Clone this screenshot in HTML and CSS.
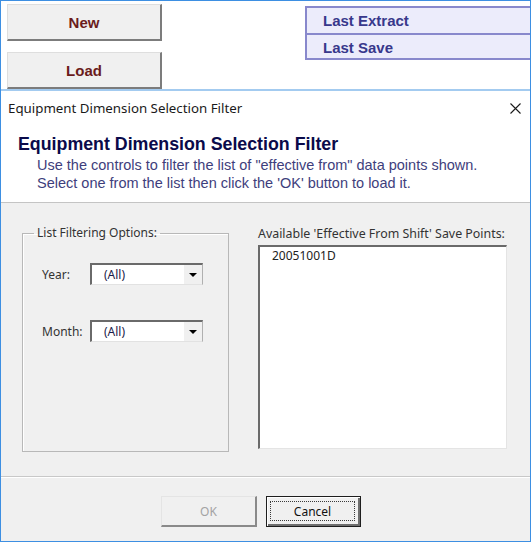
FILE: index.html
```html
<!DOCTYPE html>
<html>
<head>
<meta charset="utf-8">
<link rel="stylesheet" href="styles.css">
</head>
<body>
<div class="frame">
  <div class="top">
    <div class="top-buttons">
      <button class="big-btn">New</button>
      <button class="big-btn">Load</button>
    </div>
    <div class="status">
      <div class="status-row">Last Extract</div>
      <div class="status-row">Last Save</div>
    </div>
  </div>
  <div class="accent-line"></div>
  <div class="dialog">
    <div class="titlebar">
      <span class="title-text">Equipment Dimension Selection Filter</span>
      <svg class="close" width="11" height="11" viewBox="0 0 11 11"><path d="M0.5 0.5 L10.5 10.5 M10.5 0.5 L0.5 10.5" stroke="#1a1a1a" stroke-width="1.1" fill="none"/></svg>
    </div>
    <div class="header">
      <div class="heading">Equipment Dimension Selection Filter</div>
      <div class="desc">Use the controls to filter the list of "effective from" data points shown.<br>Select one from the list then click the 'OK' button to load it.</div>
    </div>
    <div class="body">
      <fieldset class="group">
        <legend class="legend">List Filtering Options:</legend>
        <div class="field-row first">
          <span class="field-label">Year:</span>
          <div class="combo"><span class="combo-text">(All)</span><span class="combo-btn"><span class="tri"></span></span></div>
        </div>
        <div class="field-row">
          <span class="field-label">Month:</span>
          <div class="combo"><span class="combo-text">(All)</span><span class="combo-btn"><span class="tri"></span></span></div>
        </div>
      </fieldset>
      <div class="list-col">
        <div class="list-label">Available 'Effective From Shift' Save Points:</div>
        <div class="listbox">
          <div class="list-item">20051001D</div>
        </div>
      </div>
    </div>
    <div class="footer">
      <button class="dlg-btn disabled">OK</button>
      <button class="dlg-btn default"><span class="focus">Cancel</span></button>
    </div>
  </div>
</div>
</body>
</html>
```
FILE: styles.css
```css
* { box-sizing: border-box; }
html, body { margin: 0; padding: 0; background: #ffffff; }
.frame {
  width: 531px;
  height: 542px;
  border: 1px solid #3d8fe2;
  overflow: hidden;
  display: flex;
  flex-direction: column;
  font-family: "Noto Sans", "Liberation Sans", sans-serif;
}
.top {
  height: 88px;
  flex: none;
  background: #ffffff;
  padding: 3px 0 0 6px;
  display: grid;
  grid-template-columns: 155px 1fr;
  column-gap: 143px;
  align-items: start;
}
.top-buttons { display: flex; flex-direction: column; gap: 11px; }
.big-btn {
  width: 155px;
  height: 37px;
  margin: 0;
  padding: 0;
  background: #f0f0f0;
  border-top: 1px solid #dedede;
  border-left: 1px solid #dedede;
  border-right: 2px solid #7c7c7c;
  border-bottom: 2px solid #7c7c7c;
  font-family: "Liberation Sans", Arial, sans-serif;
  font-weight: bold;
  font-size: 15px;
  color: #6b1c1c;
}
.status {
  margin-top: 2px;
  border: 2px solid #8888cc;
  border-right: none;
  background: #ececfb;
}
.status-row {
  height: 25px;
  line-height: 25px;
  padding-left: 16px;
  font-family: "Liberation Sans", Arial, sans-serif;
  font-weight: bold;
  font-size: 15px;
  color: #38388c;
}
.status-row + .status-row { border-top: 2px solid #8888cc; }
.accent-line { height: 2px; flex: none; background: #a3cbf0; }
.dialog { flex: 1; display: flex; flex-direction: column; background: #f0f0f0; }
.titlebar {
  height: 34px;
  flex: none;
  background: #ffffff;
  display: flex;
  align-items: center;
  justify-content: space-between;
  padding: 0 9px 0 7px;
}
.title-text { font-size: 13.3px; color: #1a1a1a; }
.close { display: block; }
.header {
  height: 78px;
  flex: none;
  background: #ffffff;
  padding: 9px 0 0 17px;
  border-bottom: 1px solid #c4c4c4;
}
.heading {
  font-family: "Liberation Sans", Arial, sans-serif;
  font-weight: bold;
  font-size: 17.8px;
  line-height: 20px;
  color: #0a0a4a;
}
.desc {
  margin: 3px 0 0 19px;
  font-family: "Liberation Sans", Arial, sans-serif;
  font-size: 14.5px;
  line-height: 17.5px;
  color: #3e3e7c;
}
.body {
  height: 274px;
  flex: none;
  padding: 23px 23px 0 21px;
  display: grid;
  grid-template-columns: 207px 249px;
  column-gap: 29px;
  align-items: start;
  border-bottom: 1px solid #c8c8c8;
}
.group {
  margin: 0;
  height: 226px;
  padding: 0 0 0 11px;
  border: 1px solid #b8b8b8;
  box-shadow: inset 1px 1px 0 #ffffff;
  min-width: 0;
}
.legend {
  padding: 0 3px;
  font-size: 12px;
  line-height: 14px;
  color: #333333;
}
.field-row { display: flex; align-items: center; margin-left: 8px; margin-top: 35px; }
.field-row.first { margin-top: 23px; }
.field-label { width: 48px; font-size: 12px; color: #333333; }
.combo {
  width: 113px;
  height: 22px;
  background: #ffffff;
  border-style: solid;
  border-width: 2px 1px 1px 2px;
  border-color: #6a6a6a #b0b0b0 #e2e2e2 #6a6a6a;
  display: flex;
  align-items: stretch;
}
.combo-text { flex: 1; padding-left: 12px; font-size: 12px; line-height: 19px; color: #1c1c4a; }
.combo-btn {
  width: 18px;
  background: #f0f0f0;
  display: flex;
  align-items: center;
  justify-content: center;
}
.tri {
  width: 0;
  height: 0;
  border-left: 4px solid transparent;
  border-right: 4px solid transparent;
  border-top: 4px solid #000000;
}
.list-col { margin-top: 1px; }
.list-label { font-size: 12.4px; line-height: 14px; color: #333333; }
.listbox {
  margin-top: 4px;
  height: 204px;
  background: #ffffff;
  border-style: solid;
  border-width: 2px 1px 1px 2px;
  border-color: #6a6a6a #e4e4e4 #e4e4e4 #6a6a6a;
  padding: 1px 0 0 12px;
}
.list-item { font-size: 12px; line-height: 16px; color: #222222; }
.footer {
  flex: 1;
  border-top: 1px solid #ffffff;
  padding: 18px 0 0 160px;
  display: flex;
  align-items: flex-start;
  gap: 9px;
}
.dlg-btn {
  height: 31px;
  margin: 0;
  font-family: "Noto Sans", "Liberation Sans", sans-serif;
  font-size: 12px;
  background: #f0f0f0;
}
.dlg-btn.disabled {
  width: 96px;
  padding: 0;
  color: #a3a3a3;
  border-top: 1px solid #e4e4e4;
  border-left: 1px solid #e4e4e4;
  border-right: 2px solid #8a8a8a;
  border-bottom: 2px solid #8a8a8a;
}
.dlg-btn.default {
  width: 95px;
  padding: 4px 5px 5px 3px;
  color: #111111;
  border: 1px solid #1e1e1e;
  box-shadow: inset 1px 1px 0 #ffffff, inset -2px -2px 0 #6e6e6e;
  display: flex;
}
.focus {
  flex: 1;
  display: flex;
  align-items: center;
  justify-content: center;
  border: 1px dotted #3a3a3a;
}
```
